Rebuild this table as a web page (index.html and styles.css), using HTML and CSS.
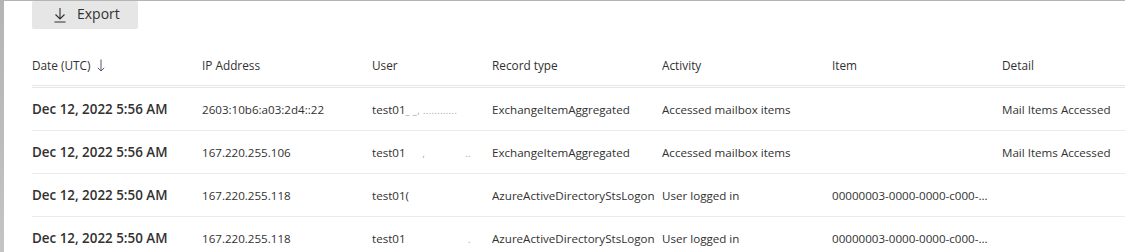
FILE: index.html
```html
<!DOCTYPE html>
<html lang="en">
<head>
    <meta charset="UTF-8">
    <title>Audit log</title>
    <link rel="stylesheet" href="styles.css">
</head>
<body>
    <div class="frame-edge"></div>
    <main class="pane">
        <div class="toolbar">
            <button class="export-btn">
                <svg class="export-icon" width="14" height="16" viewBox="0 0 14 16">
                    <path d="M7 1 V12 M2.5 7.5 L7 12 L11.5 7.5 M1.5 15 H12.5" fill="none" stroke="#323130" stroke-width="1.1"/>
                </svg>
                Export
            </button>
        </div>

        <div class="grid">
            <div class="row head">
                <div class="sortable">Date (UTC)
                    <svg class="sort" width="8" height="13" viewBox="0 0 8 13">
                        <path d="M4 0.5 V12 M0.8 8.8 L4 12 L7.2 8.8" fill="none" stroke="#5c5070" stroke-width="1"/>
                    </svg>
                </div>
                <div>IP Address</div>
                <div>User</div>
                <div>Record type</div>
                <div>Activity</div>
                <div>Item</div>
                <div>Detail</div>
            </div>
            <div class="row">
                <div class="date">Dec 12, 2022 5:56 AM</div>
                <div>2603:10b6:a03:2d4::22</div>
                <div class="user">test01<span class="redact">_ _, ............</span></div>
                <div>ExchangeItemAggregated</div>
                <div>Accessed mailbox items</div>
                <div></div>
                <div>Mail Items Accessed</div>
            </div>
            <div class="row">
                <div class="date">Dec 12, 2022 5:56 AM</div>
                <div>167.220.255.106</div>
                <div class="user">test01<span class="redact">&nbsp; &nbsp; &nbsp; ,&nbsp; &nbsp; &nbsp; &nbsp; &nbsp; &nbsp; &nbsp; ..</span></div>
                <div>ExchangeItemAggregated</div>
                <div>Accessed mailbox items</div>
                <div></div>
                <div>Mail Items Accessed</div>
            </div>
            <div class="row">
                <div class="date">Dec 12, 2022 5:50 AM</div>
                <div>167.220.255.118</div>
                <div class="user">test01(</div>
                <div>AzureActiveDirectoryStsLogon</div>
                <div>User logged in</div>
                <div>00000003-0000-0000-c000-...</div>
                <div></div>
            </div>
            <div class="row">
                <div class="date">Dec 12, 2022 5:50 AM</div>
                <div>167.220.255.118</div>
                <div class="user">test01<span class="redact">&nbsp; &nbsp; &nbsp; &nbsp; &nbsp; &nbsp; &nbsp; &nbsp; &nbsp; &nbsp; &nbsp; .</span></div>
                <div>AzureActiveDirectoryStsLogon</div>
                <div>User logged in</div>
                <div>00000003-0000-0000-c000-...</div>
                <div></div>
            </div>
        </div>
    </main>
</body>
</html>
```

FILE: styles.css
```css
* {
    margin: 0;
    padding: 0;
    box-sizing: border-box;
}

body {
    display: flex;
    height: 252px;
    overflow: hidden;
    font-family: "Open Sans", "Noto Sans", sans-serif;
    color: #323130;
    background: #ffffff;
}

.frame-edge {
    width: 4px;
    flex-shrink: 0;
    background: linear-gradient(to bottom, #b4b4b4, #c4c4c4);
}

.pane {
    flex: 1;
    border-top: 1px solid #b4b4b4;
    padding-left: 28px;
}

.toolbar {
    display: flex;
    height: 28px;
}

.export-btn {
    display: flex;
    align-items: center;
    gap: 10px;
    width: 106px;
    height: 28px;
    padding-left: 21px;
    padding-bottom: 3px;
    border: none;
    border-radius: 2px;
    background: #e6e6e6;
    font-family: inherit;
    font-size: 14px;
    color: #323130;
}

.export-icon {
    margin-top: 2px;
}

.grid {
    margin-top: 16px;
}

.row {
    display: grid;
    grid-template-columns: 170px 170px 120px 170px 170px 170px 1fr;
    align-items: center;
    height: 43px;
    border-bottom: 1px solid #edebe9;
    font-size: 11.6px;
    white-space: nowrap;
    overflow: hidden;
}

.row > div {
    overflow: hidden;
}

.row.head {
    height: 43px;
    font-size: 11.8px;
    border-bottom: 3px double #e8e6e4;
}

.sortable {
    display: flex;
    align-items: center;
    gap: 6px;
}

.sort {
    margin-top: 1px;
}

.date {
    font-size: 13.4px;
    font-weight: 600;
}

.redact {
    color: #9a9a9a;
    font-size: 9px;
    letter-spacing: 0.5px;
}
```
